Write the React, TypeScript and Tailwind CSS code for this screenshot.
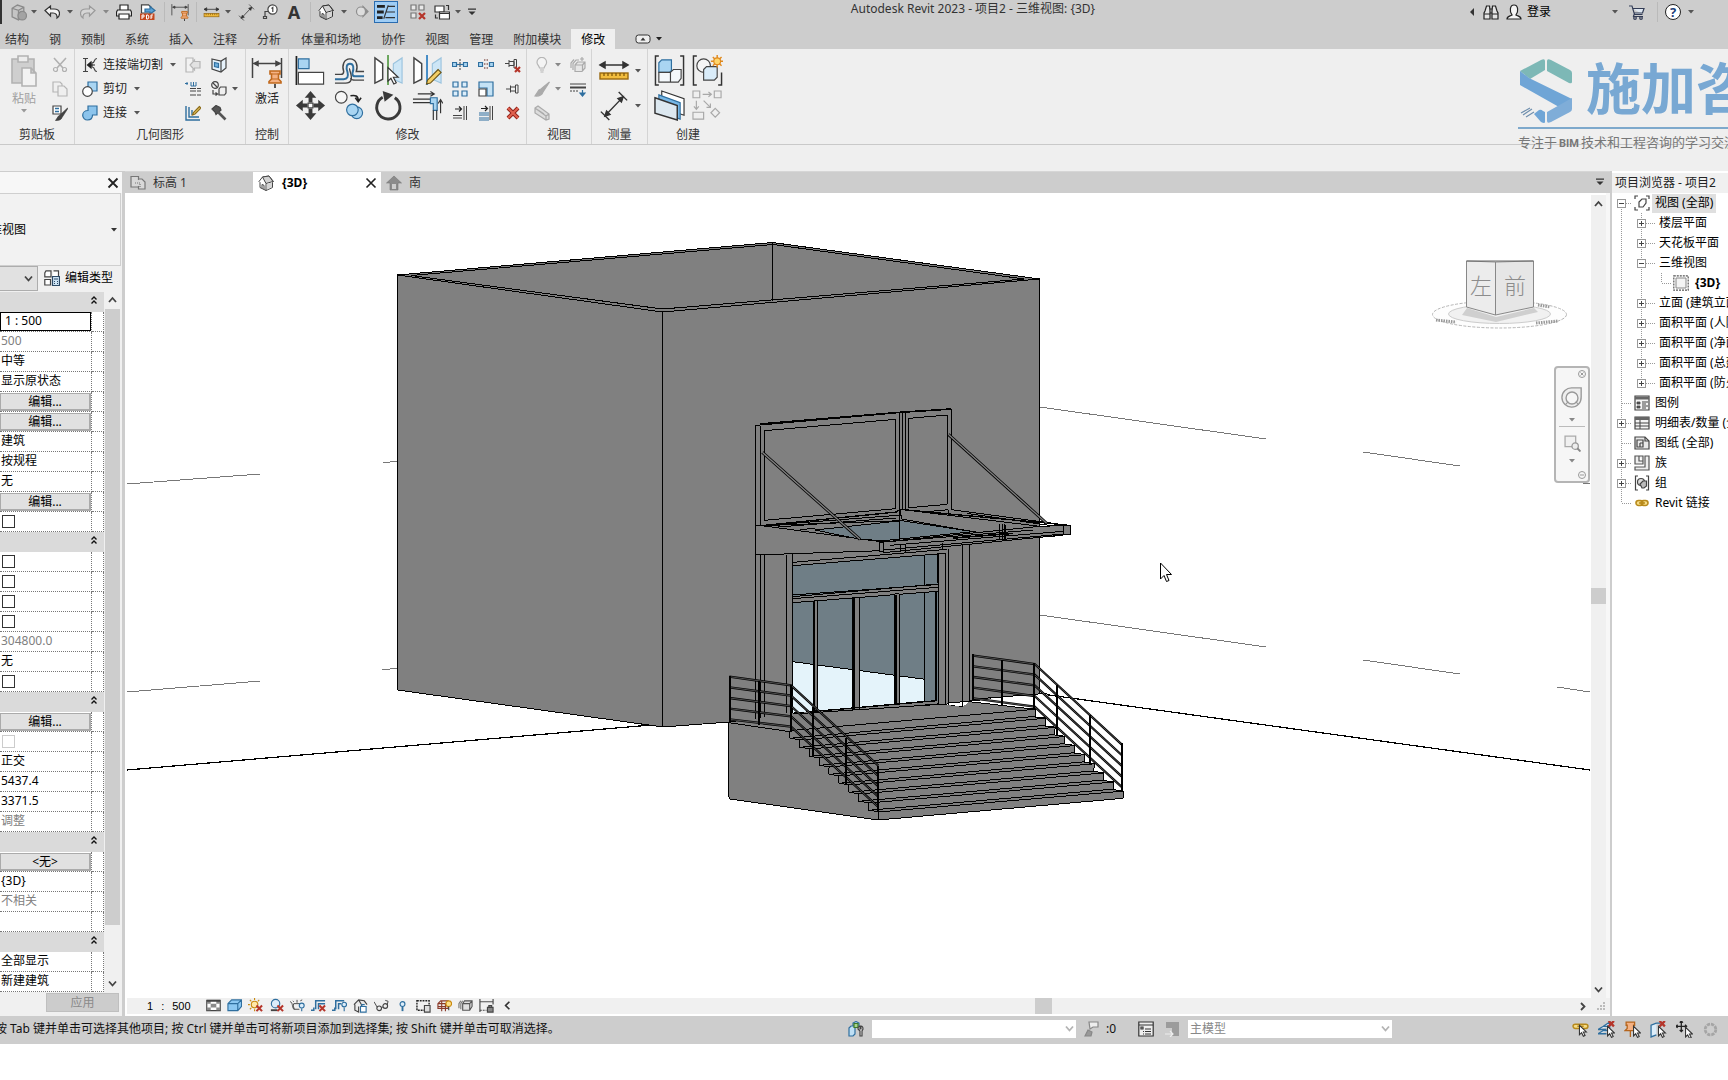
import React from "react";

type Kids = { children?: React.ReactNode };

function Icon({ children, box = 16, className = "size-4" }: Kids & { box?: number; className?: string }) {
  return (
    <svg viewBox={`0 0 ${box} ${box}`} className={`${className} shrink-0`} fill="none" stroke="#444" strokeWidth={1.2} aria-hidden="true">
      {children}
    </svg>
  );
}

function Caret({ className = "w-3", color = "#555" }: { className?: string; color?: string }) {
  return (
    <span className={`${className} flex shrink-0 items-center justify-center`}>
      <svg viewBox="0 0 6 4" className="h-1 w-1.5" aria-hidden="true">
        <path d="M0 0h6L3 3.6z" fill={color} />
      </svg>
    </span>
  );
}

function Tool({ label, children, className = "h-6 w-6" }: Kids & { label: string; className?: string }) {
  return (
    <button type="button" aria-label={label} className={`${className} flex shrink-0 items-center justify-center`}>
      {children}
    </button>
  );
}

const Rule = () => (
  <span className="flex w-2 shrink-0 justify-center">
    <span className="h-5 w-px bg-[#bababa]" />
  </span>
);

const B = "#2f6f9f";
const L = "#a9d5f2";
const RedX = ({ x = 9, y = 9, s = 6 }) => (
  <path d={`M${x} ${y}l${s} ${s}M${x + s} ${y}l${-s} ${s}`} stroke="#b5352a" strokeWidth={2.2} />
);
const Pointer = ({ x = 7, y = 5 }) => (
  <path d={`M${x} ${y}v9l2-2 1.7 3.4 1.6-.8-1.6-3.3h2.8z`} fill="#fff" stroke="#333" strokeWidth={1} />
);

const House = ({ color = "#333" }) => (
  <Icon>
    <path d="M1 6.500L4.500 2 11 1l4.500 5.500-1 1v5L8 15.500 2 12.500V7.500z" fill="#fff" stroke={color} strokeWidth={1} />
    <path d="M4.500 2L8 8.500l7-2L11 1z" fill="#d2d2d2" stroke={color} strokeWidth={1} />
    <path d="M8 8.500v7M4 13.300V9.500l2 .8v4" stroke={color} strokeWidth={1} />
    <path d="M9 9l5-1.400v4.500l-5 2.300z" fill="#d5d5d5" stroke="none" />
  </Icon>
);

const DimPin = ({ size = "size-4" }) => (
  <Icon box={32} className={size}>
    <path d="M1.500 2v20M30.500 2v20M3 7.500h26M3 7.500l4-2v4zM29 7.500l-4-2v4z" strokeWidth={1.500} fill="#444" />
    <path d="M19 15h10v3h-1.500v5l2.500 2.500V27H18v-1.500l2.500-2.500v-5H19z" fill="#f4b183" stroke="#c0681c" strokeWidth={1.6} />
    <path d="M21 18h6M20.500 23h7" stroke="#c0681c" strokeWidth={1.200} />
    <path d="M24 28v4" strokeWidth={1.8} />
  </Icon>
);

const Ruler = ({ size = "size-4" }) => (
  <Icon box={32} className={size}>
    <path d="M2 10h28M2 10l5-3v6zM30 10l-5-3v6z" fill="#333" stroke="#333" strokeWidth={1.500} />
    <rect x="2" y="18" width="28" height="6" fill="#f2bd3e" stroke="#9a6a10" strokeWidth={1.400} />
    <path d="M6 18v3M10 18v3M14 18v3M18 18v3M22 18v3M26 18v3" stroke="#7a5208" />
  </Icon>
);

const DiagonalDim = ({ size = "size-4" }) => (
  <Icon box={32} className={size}>
    <path d="M2 22l9 9M21 1l9 9M6 27L26 6" stroke="#333" strokeWidth={1.500} />
    <path d="M6 27l2-6 4 4zM26 6l-6 2 4 4z" fill="#333" stroke="#333" />
  </Icon>
);

function QuickAccess() {
  return (
    <div className="flex h-6 items-center border-l-2 border-[#333] pl-1.5">
      <Tool label="同步" className="h-6 w-5">
        <Icon className="size-[17px]">
          <path d="M2 4l5-3 6 2v8l-5 4-6-3zM2 4l6 2 5-3M8 6v9" stroke="#8a8a8a" fill="#c4c4c4" />
          <circle cx="11.500" cy="11" r="4" fill="#a3a3a3" stroke="#8a8a8a" />
        </Icon>
      </Tool>
      <Caret />
      <Tool label="放弃">
        <Icon>
          <path d="M1 6.500L6.500 2v3H10c3.500 0 5.500 2 5.500 4.500 0 2-1 3.500-2.500 4.500.3-3-1-5-4-5H6.500v3z" fill="#f4f4f4" stroke="#333" />
        </Icon>
      </Tool>
      <Caret />
      <Tool label="重做">
        <Icon>
          <path d="M15 6.500L9.500 2v3H6C2.500 5 .5 7 .5 9.500c0 2 1 3.500 2.500 4.500-.3-3 1-5 4-5h2.500v3z" fill="#d6d6d6" stroke="#9a9a9a" />
        </Icon>
      </Tool>
      <Caret color="#888" />
      <Tool label="打印">
        <Icon>
          <path d="M4 6V1h8v5" fill="#fff" stroke="#222" />
          <path d="M1.500 6h13L15.500 8v4H.5V8z" fill="#eee" stroke="#222" />
          <path d="M3 10h10v5H3z" fill="#fff" stroke="#222" />
        </Icon>
      </Tool>
      <Tool label="导出 PDF">
        <Icon>
          <path d="M1.500 9V.8h7L11 3v6z" fill="#fff" />
          <path d="M5 5h5V2.500L15 6.500 10 10V8H5z" fill="#5aa2d6" stroke={B} />
          <path d="M0 9.500h14.500V16H0z" fill="#c4481f" stroke="none" />
          <path d="M2 15v-4h2v2H2M6.500 11h1.500l1 2-1 2H6.500zM11 15v-4h2M11 13h1.500" stroke="#fff" strokeWidth={1} />
        </Icon>
      </Tool>
      <Rule />
      <Tool label="激活尺寸标注"><DimPin size="size-[18px]" /></Tool>
      <Rule />
      <Tool label="测量" className="h-6 w-[22px]"><Ruler size="size-[17px]" /></Tool>
      <Caret />
      <Tool label="对齐尺寸标注"><DiagonalDim size="size-[17px]" /></Tool>
      <Tool label="按类别标记">
        <Icon>
          <circle cx="10.500" cy="5.500" r="4.600" fill="#fff" />
          <path d="M9.500 4.500l1.300-1v4.500M6 7.500H3v5.500M1.500 12.500h3v2h-3z" />
        </Icon>
      </Tool>
      <Tool label="文字">
        <span className="text-[18px] font-bold leading-6 text-[#333]">A</span>
      </Tool>
      <Rule />
      <Tool label="默认三维视图"><House /></Tool>
      <Caret />
      <Tool label="剖面">
        <Icon>
          <path d="M9 2.500l5 5-5 5z" fill="#8d8d8d" stroke="#8d8d8d" />
          <circle cx="7" cy="7.500" r="4.500" fill="#ddd" stroke="#8d8d8d" />
        </Icon>
      </Tool>
      <button type="button" aria-label="细线" className="flex h-[22px] w-6 shrink-0 items-center justify-center border border-[#2a6cb0] bg-[#9fcdf5]">
        <Icon className="size-[18px]">
          <path d="M0 3h7M0 8h6M0 13h5" stroke="#222" strokeWidth={2.600} />
          <path d="M9.500 3H16M8.500 8H16M7.500 13H16M10 2L6 14" stroke="#333" strokeWidth={1} />
        </Icon>
      </button>
      <Tool label="关闭非活动视图" className="ml-2 h-6 w-6">
        <Icon>
          <path d="M1 1h5v5H1zM9 1h5v5H9zM1 9h5v5H1z" fill="#e9e9e9" stroke="#777" />
          <RedX x={9} y={9} s={6} />
        </Icon>
      </Tool>
      <Tool label="切换窗口">
        <Icon>
          <path d="M1 2h9v6H1z" fill="#fff" stroke="#333" />
          <path d="M5.500 8h10v7h-10zM5.500 9.500h10" fill="#fff" stroke="#333" />
          <path d="M12 1.500h2.500V6M1.500 10.500V14H4" stroke="#333" />
        </Icon>
      </Tool>
      <Caret className="w-2" />
      <Tool label="自定义快速访问工具栏" className="h-6 w-5">
        <svg viewBox="0 0 8 8" className="size-2" aria-hidden="true">
          <path d="M0 .5h8v1.300H0zM.5 3.500h7L4 7z" fill="#333" />
        </svg>
      </Tool>
    </div>
  );
}

const ribbonTabs = ["结构", "钢", "预制", "系统", "插入", "注释", "分析", "体量和场地", "协作", "视图", "管理", "附加模块"];

function TitleBar() {
  return (
    <header className="bg-[#cdcdcd]">
      <div className="flex h-[29px] items-start">
        <QuickAccess />
        <h1 className="min-w-0 flex-1 truncate text-center text-xs leading-[18px] text-[#333]">
          Autodesk Revit 2023 - 项目2 - 三维视图: {"{3D}"}
        </h1>
        <div className="flex h-6 w-[264px] shrink-0 items-center text-xs">
          <Tool label="收拢搜索" className="h-6 w-4">
            <svg viewBox="0 0 4 8" className="h-2 w-1" aria-hidden="true"><path d="M4 0v8L0 4z" fill="#333" /></svg>
          </Tool>
          <Tool label="搜索" className="h-6 w-[22px]">
            <Icon>
              <path d="M2 7l1.500-5h3L7 7v8H1V9zM14 7l-1.500-5h-3L9 7v8h6V9zM7 5h2M7 9h2M1 10h6M9 10h6" fill="#e4e4e4" stroke="#222" />
            </Icon>
          </Tool>
          <button type="button" className="flex h-6 items-center">
            <span className="flex w-6 justify-center">
              <Icon>
                <path d="M1 15c0-2.500 2-2.500 5-4C3.500 8 3.500 1 8 1s4.500 7 2 10c3 1.500 5 1.500 5 4z" fill="#f4f4f4" stroke="#222" />
              </Icon>
            </span>
            <span className="ml-px">登录</span>
          </button>
          <span className="w-[58px]" />
          <Caret />
          <Tool label="Autodesk App Store" className="h-6 w-8">
            <Icon>
              <path d="M0 2h3l2.500 8.500h8M3.500 4.500H15L13.500 9H5" fill="#dfe8f2" stroke="#333c55" />
              <path d="M5 10.500l-.5 2H14" stroke="#333c55" />
              <circle cx="6" cy="14" r="1.300" stroke="#333c55" /><circle cx="12" cy="14" r="1.300" stroke="#333c55" />
            </Icon>
          </Tool>
          <Rule />
          <Tool label="帮助">
            <span className="flex size-4 items-center justify-center rounded-full border border-[#222] bg-white text-[13px] font-bold leading-none text-[#1d3f7a]">?</span>
          </Tool>
          <Caret />
        </div>
      </div>
      <nav className="-ml-[5px] flex h-5 items-stretch text-xs text-[#333]">
        {ribbonTabs.map((t) => (
          <button key={t} type="button" className="shrink-0 px-[10px] pt-0.5">{t}</button>
        ))}
        <button type="button" aria-current="page" className="shrink-0 bg-[#efefef] px-[10px] pt-0.5 text-black">修改</button>
        <button type="button" aria-label="最小化功能区" className="ml-5 flex items-center gap-1">
          <svg viewBox="0 0 16 10" className="h-2.5 w-4" aria-hidden="true">
            <rect x="1" y="1" width="14" height="8" rx="2.500" fill="#eee" stroke="#333" />
            <path d="M5.500 6.500h5L8 3.500z" fill="#333" />
          </svg>
          <Caret className="w-2" color="#222" />
        </button>
      </nav>
    </header>
  );
}

function Panel({ title, className, children, last }: Kids & { title: string; className: string; last?: boolean }) {
  return (
    <section className={`${className} flex shrink-0 flex-col pt-1 ${last ? "" : "border-r border-[#d4d4d4]"}`}>
      <div className="flex h-[74px]">{children}</div>
      <h2 className="text-center text-xs leading-4 text-[#333]">{title}</h2>
    </section>
  );
}

const Small = ({ label, children }: Kids & { label: string }) => <Tool label={label} className="h-6 w-full">{children}</Tool>;
const Big = ({ label, children }: Kids & { label: string }) => (
  <Tool label={label} className="h-[35px] w-full"><Icon box={32} className="size-[31px]">{children}</Icon></Tool>
);

function TextTool({ text, icon }: { text: string; icon: React.ReactNode }) {
  return (
    <button type="button" className="flex h-6 items-center text-xs">
      <span className="flex w-[21px] items-center"><Icon>{icon}</Icon></span>
      {text}
      <Caret className="ml-1 w-3" />
    </button>
  );
}

function Ribbon() {
  return (
    <div className="flex h-24 overflow-hidden border-b border-[#c9c9c9] bg-[#efefef] text-[#222]">
      <Panel title="剪贴板" className="w-[75px]">
        <button type="button" className="flex w-12 flex-col items-center text-xs leading-4 text-[#a0a0a0]">
          <Icon box={32} className="mt-0.5 size-8">
            <path d="M4 4h22v24H4z" fill="#cfcfcf" stroke="#b2b2b2" strokeWidth={1.600} />
            <path d="M10 1h10v6H10z" fill="#ececec" stroke="#b2b2b2" strokeWidth={1.600} />
            <path d="M14 13h9l5 5v13H14zM23 13v5h5" fill="#f2f2f2" stroke="#b2b2b2" strokeWidth={1.600} />
          </Icon>
          <span className="mt-1">粘贴</span>
          <Caret className="mt-0.5 w-3" color="#999" />
        </button>
        <div className="w-6">
          <Small label="剪切到剪贴板">
            <Icon><path d="M2 1l9 10M14 1L5 11" stroke="#b0b0b0" strokeWidth={1.600} /><circle cx="3.500" cy="12.500" r="2" stroke="#b0b0b0" /><circle cx="12.500" cy="12.500" r="2" stroke="#b0b0b0" /></Icon>
          </Small>
          <Small label="复制到剪贴板">
            <Icon><path d="M1 1h7l2 2v8H1z" stroke="#b5b5b5" /><path d="M6 5h6l3 3v7H6z" fill="#efefef" stroke="#b5b5b5" /></Icon>
          </Small>
          <Small label="匹配类型属性">
            <Icon><path d="M1 1h8v8H1z" fill="#fff" /><path d="M3 3.500h4M3 6.500h4" stroke={B} strokeWidth={1.600} /><path d="M15.500 3L8 10l-1.500 1-3 4.500c3 .3 6-.8 6.500-3L15.500 4z" fill="#444" stroke="#333" strokeWidth={.6} /></Icon>
          </Small>
        </div>
      </Panel>

      <Panel title="几何图形" className="w-[171px]">
        <div className="w-[105px] shrink-0 pl-[7px]">
          <TextTool text="连接端切割" icon={<><path d="M1 1.500h5M1 14.500h5M3.500 1.500v13M15 1.500c-4 0-1 4-5 4.500v4c4 .5 1 4.500 5 4.500" /><path d="M13 8H6M9 5L5.500 8 9 11z" fill="#222" stroke="#222" /></>} />
          <TextTool text="剪切" icon={<><path d="M6 1h9v9H6z" fill={L} stroke={B} /><circle cx="5.500" cy="10.500" r="4.800" fill="#fff" /></>} />
          <TextTool text="连接" icon={<path d="M6 1h9v9h-4.500c0 3-2 5-5 5a4.700 4.700 0 0 1-4.800-4.800C.7 7.500 3 5.500 6 5.500z" fill="#8cc4ec" stroke={B} />} />
        </div>
        <div className="w-[26px] shrink-0">
          <Small label="连接端重合"><Icon><path d="M8 4V1H1v14h7v-3" fill="#f2f2f2" stroke="#b5b5b5" /><path d="M15 4.500H9.500V3L5 8l4.500 5v-2H15z" fill="#e2e2e2" stroke="#b5b5b5" /></Icon></Small>
          <Small label="梁柱连接"><Icon><path d="M0 2.500h3M2 1v3M6 1v4h5V1M8.500 1v4" strokeWidth={1} stroke={B} /><path d="M5 7.500h11M5 10h11M5 14h11" strokeWidth={1} strokeDasharray="6 1" /></Icon></Small>
          <Small label="墙连接"><Icon><path d="M1 1v14h14M4 2v10h10M7 5v5" stroke={B} strokeWidth={1.400} /><path d="M14.500 1.500l-6 6-1 2.500 2.500-1 6-6z" fill="#f1cf6b" stroke="#8c6c1a" /></Icon></Small>
        </div>
        <div className="w-[25px] shrink-0">
          <Small label="拆分面"><Icon><path d="M1 2l9 2 5-3v10l-5 4-9-3z" fill="#e6f2fb" /><path d="M10 4v11" /><path d="M3.500 5.500l4 1v4l-4-1z" fill="#6fb1e0" stroke={B} /></Icon></Small>
          <Small label="填色"><Icon><circle cx="4" cy="4" r="3.300" /><path d="M2 2l4 4M8 8l1.500-2H15v6l-1.500 2H8zM2 9v4h4M4.500 11.500L6.500 13l-2 1.500" /></Icon></Small>
          <Small label="拆除"><Icon><path d="M1 4l4-3.500 4 2L10 5 5 9.500 4 7z" fill="#555" /><path d="M7 7l7.500 7.500" strokeWidth={2.600} stroke="#555" /></Icon></Small>
        </div>
        <div className="mt-6 flex h-6"><Caret className="w-2" /></div>
      </Panel>

      <Panel title="控制" className="w-[43px]">
        <button type="button" className="flex w-full flex-col items-center text-xs leading-4">
          <span className="mt-[3px]"><DimPin size="size-8" /></span>
          <span className="mt-[3px]">激活</span>
        </button>
      </Panel>

      <Panel title="修改" className="w-[238px]">
        <div className="ml-0.5 grid w-[156px] shrink-0 grid-cols-4 content-start">
          <Big label="对齐"><path d="M1.500 1v30" stroke="#222" strokeWidth={1.800} /><path d="M3.500 4h11v10h-11z" fill={L} stroke={B} /><path d="M3.500 18h26v12h-26z" fill="#fff" /></Big>
          <Big label="偏移"><path d="M1 20h6c2 0 3-1 3-3-2-6 0-13 6.500-13S25 11 23 17h8" stroke="#444" strokeWidth={1.500} /><path d="M1 25h9c4 0 5-3 4-7-2-5-1-9 2.500-9s4.500 4 2.500 10c0 2 1 3 3 3h9" fill="none" stroke={B} strokeWidth={2} /><path d="M1 29h11c6 0 7-4 5-11-1-3-1-4-.5-4" stroke="#444" strokeWidth={1.400} /><path d="M17 24c1 2 3 2 5 2h9" stroke="#444" strokeWidth={1.400} /></Big>
          <Big label="镜像 - 拾取轴"><path d="M2 3l8 6v16l-8 4z" fill="#fff" strokeWidth={1.500} /><path d="M21 9l9-6v26l-9-4z" fill="#cde6f6" stroke="#9cc4de" /><path d="M15.500 0v31" stroke="#5a9c4a" strokeWidth={1.800} /><path d="M15.500 13v14l3-3 3 6 2.500-1.300-3-5.700h5z" fill="#fff" stroke="#333" /></Big>
          <Big label="镜像 - 绘制轴"><path d="M2 3l8 6v16l-8 4z" fill="#fff" strokeWidth={1.500} /><path d="M21 9l9-6v26l-9-4z" fill="#cde6f6" stroke="#9cc4de" /><path d="M15.500 0v31" stroke="#2f7fc0" strokeWidth={1.800} /><path d="M27 15L16 26l-1 4 4-1 11-11z" fill="#f3cf66" stroke="#6d5518" /></Big>
          <Big label="移动"><path d="M16 1l6 7h-4v5h-4V8h-4zM16 31l6-7h-4v-5h-4v5h-4zM1 16l7-6v4h5v4H8v4zM31 16l-7-6v4h-5v4h5v4z" fill="#3a3a3a" stroke="none" /><path d="M13.500 13.500h5v5h-5z" fill="#fff" /></Big>
          <Big label="复制"><circle cx="7.500" cy="7.500" r="6" fill="#f6f6f6" /><path d="M17 6c5-1 8 0 8 5M22 8l3 4 3-4" stroke="#222" strokeWidth={1.600} /><circle cx="23.500" cy="23.500" r="6" fill={L} stroke={B} /><circle cx="19" cy="20.500" r="6" fill={L} stroke={B} /></Big>
          <Big label="旋转"><path d="M10 7.500a12 12 0 1 0 12.500.5" strokeWidth={3} stroke="#3a3a3a" /><path d="M10 1l11 4-9 7z" fill="#3a3a3a" stroke="none" /></Big>
          <Big label="修剪/延伸为角"><path d="M1 9.500h18M1 13h18" stroke="#333" /><path d="M19 8h7v13h-4V14h-3z" fill={L} stroke={B} /><path d="M22 21v10M25.500 21v10" stroke="#333" /><path d="M6 4h16M19 1.500L23 4l-4 2.500M29.500 24V11M27 14l2.500-4 2.500 4" stroke="#333" /></Big>
        </div>
        <div className="grid flex-1 grid-cols-3 content-start">
          <Small label="拆分图元"><Icon><path d="M.5 5.500h4v4h-4zM11.500 5.500h4v4h-4z" fill={L} stroke={B} /><path d="M4.500 7.500h7" stroke={B} /><path d="M8 2v11" stroke="#555" strokeDasharray="2 1" /></Icon></Small>
          <Small label="用间隙拆分"><Icon><path d="M.5 5.500h4v4h-4zM11.500 5.500h4v4h-4z" fill={L} stroke={B} /><path d="M6.800 2v11M9.200 2v11" stroke="#8a5a55" strokeWidth={1} strokeDasharray="2 2" /></Icon></Small>
          <Small label="解锁"><Icon><path d="M0 6.500h4M4 3v7M4 4.500h5v4H4M9 2.500h2.500v8.500H9z" strokeWidth={1} /><RedX x={10} y={10} s={5} /></Icon></Small>
          <Small label="阵列"><Icon><path d="M1 1h5v5H1zM10 1h5v5h-5zM1 10h5v5H1zM10 10h5v5h-5z" fill="#dceefb" stroke={B} /></Icon></Small>
          <Small label="缩放"><Icon><path d="M1 1h14v14H9V7H1z" fill="#c4e2f5" stroke={B} /><path d="M1 8h7v7H1z" fill="#fff" /></Icon></Small>
          <Small label="锁定"><Icon><path d="M1 8h4.500M5.500 4.500v7M5.500 6h5v4h-5M10.500 4H13v8h-2.500z" strokeWidth={1} /></Icon></Small>
          <Small label="修剪/延伸单个图元"><Icon><path d="M12 1v14M14.500 1v14M1 10.500h9M1 13h9" strokeWidth={1} /><path d="M3 4h6M7 1.500L9.500 4 7 6.500" stroke="#222" /></Icon></Small>
          <Small label="修剪/延伸多个图元"><Icon><path d="M12 1v14M14.500 1v14" strokeWidth={1} /><path d="M1 8h10M1 10h10M1 13h10M1 15h10" stroke={B} strokeWidth={1} /><path d="M3 3.500h6M7 1l2.500 2.500L7 6" stroke="#222" /></Icon></Small>
          <Small label="删除"><Icon><path d="M3 3l10 10M13 3L3 13" stroke="#8f2018" strokeWidth={4} /><path d="M3 3l10 10M13 3L3 13" stroke="#e0614f" strokeWidth={2.200} /></Icon></Small>
        </div>
      </Panel>

      <Panel title="视图" className="w-[65px]">
        <div className="w-7 pl-0.5">
          <Small label="在视图中隐藏"><Icon><path d="M5.500 11C5 8.500 3 8 3 5.200a4.800 4.800 0 0 1 9.600 0c0 2.800-2 3.300-2.500 5.800zM6 13h4M6.500 15h3" stroke="#b5b5b5" fill="#f4f4f4" /></Icon></Small>
          <Small label="替换视图中的图形"><Icon><path d="M15.500 1L7 8l-2 1-4 6c4 .3 7-1 8-4z" fill="#aaa" stroke="#aaa" /></Icon></Small>
          <Small label="选择框"><Icon><path d="M1 3l3-2 11 8v5l-3 1L1 8zM1 3l11 8v4M12 11l3-2M4 5l6 4" fill="#ddd" stroke="#aaa" /></Icon></Small>
        </div>
        <div className="flex w-2 flex-col"><span className="flex h-6"><Caret className="w-1.5" color="#888" /></span><span className="flex h-6"><Caret className="w-1.5" color="#888" /></span></div>
        <div className="flex-1 pl-0.5">
          <Small label="置换图元"><Icon><path d="M5 8l2.500-3H15v6l-3 3.500H5zM5 8h7.500v6M12.500 8L15 5" fill="#e6e6e6" stroke="#aaa" /><path d="M3 13V6.500L6 3h3M1 11V6l3-3.500M12 0v4M10 2h4" stroke="#aaa" /></Icon></Small>
          <Small label="线处理"><Icon><path d="M0 3h16" strokeWidth={1} /><path d="M0 6.500h16" strokeWidth={2} /><path d="M0 10h9" strokeDasharray="2 1" /><path d="M12.500 9v5M10 12l2.500 3 2.500-3z" fill={B} stroke={B} /></Icon></Small>
        </div>
      </Panel>

      <Panel title="测量" className="w-14">
        <div className="w-[42px] pl-px">
          <Tool label="测量两个参照之间的距离" className="h-[35px] w-full"><Ruler size="size-8" /></Tool>
          <Tool label="对齐" className="h-[35px] w-full"><DiagonalDim size="size-[30px]" /></Tool>
        </div>
        <div className="flex flex-col"><span className="flex h-[35px]"><Caret className="w-2" /></span><span className="flex h-[35px]"><Caret className="w-2" /></span></div>
      </Panel>

      <Panel title="创建" className="w-20" last>
        <div className="ml-0.5 grid w-[76px] shrink-0 grid-cols-2 content-start">
          <Big label="创建组"><path d="M5 1H1.500v30H5M27 1h3.500v30H27" strokeWidth={1.500} stroke="#333" /><path d="M5 8l3-3h10v11l-2 2H5z" fill={L} stroke={B} /><path d="M5 18h12v10H5zM17 18l3-3h8v9l-3 4h-8z" fill="#f4f8fb" /></Big>
          <Big label="创建零件"><path d="M5 1H1.500v30H5M30.500 18v13H27" strokeWidth={1.500} stroke="#333" /><circle cx="12" cy="11" r="7" fill="#f6f6f6" /><path d="M12 15l3-3h11v11l-3 3H12z" fill="#d9ecf9" /><path d="M26 0v13M19.500 6.500h13M21.500 2l9 9M30.500 2l-9 9" stroke="#e08a1e" strokeWidth={1.500} /><circle cx="26" cy="6.500" r="3.500" fill="#ffd66b" stroke="#e08a1e" /></Big>
          <Big label="创建部件"><path d="M8 1l23 8v17l-23-8z" fill="#fff" stroke="#333" /><path d="M5 5l22 8v17l-22-8z" fill="#76b7e6" stroke={B} /><path d="M1 8l23 8v15L1 24z" fill="#dce8f0" stroke="#333" strokeWidth={1.500} /></Big>
          <Big label="创建类似实例"><path d="M1 1h7v7H1zM23 1h7v7h-7zM1 23h11v7H1zM24 19l4.500 4.500L24 28l-4.500-4.500zM11 4.500h9M17 2l3 2.500L17 7M4.500 11v9M2 17l2.500 3L7 17M12 11l7 7M19 14v4h-4" stroke="#a8a8a8" /></Big>
        </div>
      </Panel>
    </div>
  );
}

function Watermark() {
  return (
    <div className="pointer-events-none absolute right-0 top-[56px] w-[210px] overflow-hidden whitespace-nowrap">
      <div className="flex h-[73px] items-center border-b-2 border-[#7ea9cc] pl-0.5">
        <svg viewBox="0 0 54 66" className="h-[66px] w-[54px] shrink-0" aria-hidden="true">
          <path d="M0 12L21 1q4-2 4 1v9L10 20z" fill="#7db8b6" />
          <path d="M27 2q0-3 4-1l19 10q2 1 2 3v9q0 2-3 1L27 12z" fill="#7db8b6" />
          <path d="M0 12l9 7 43 21-13 8L0 26z" fill="#6fa5d6" />
          <path d="M27 53l25-14v11q0 2-2 3L31 63q-4 2-4-1z" fill="#7fadd8" />
          <path d="M14 55l5-4q2-1 4 1l2 1v10q0 2-4 0z" fill="#6fa5d6" />
          <path d="M1 54l9-5M3 56l9-6M6 58l8-5" stroke="#6f8fae" strokeWidth="1.200" />
        </svg>
        <span className="mb-2 ml-3 text-[55px] font-bold leading-none text-[#78a8d3]">施加咨询</span>
      </div>
      <p className="text-[13px] leading-[26px] text-[#777]">专注于<span className="mx-0.5 font-['Roboto'] text-[11px] font-bold">BIM</span>技术和工程咨询的学习交流</p>
    </div>
  );
}

type Row = { kind: "head" | "text" | "dim" | "edit" | "check" | "off" | "scale"; text?: string };
const properties: Row[] = [
  { kind: "head" },
  { kind: "scale", text: "1 : 500" },
  { kind: "dim", text: "500" },
  { kind: "text", text: "中等" },
  { kind: "text", text: "显示原状态" },
  { kind: "edit", text: "编辑..." },
  { kind: "edit", text: "编辑..." },
  { kind: "text", text: "建筑" },
  { kind: "text", text: "按规程" },
  { kind: "text", text: "无" },
  { kind: "edit", text: "编辑..." },
  { kind: "check" },
  { kind: "head" },
  { kind: "check" },
  { kind: "check" },
  { kind: "check" },
  { kind: "check" },
  { kind: "dim", text: "304800.0" },
  { kind: "text", text: "无" },
  { kind: "check" },
  { kind: "head" },
  { kind: "edit", text: "编辑..." },
  { kind: "off" },
  { kind: "text", text: "正交" },
  { kind: "text", text: "5437.4" },
  { kind: "text", text: "3371.5" },
  { kind: "dim", text: "调整" },
  { kind: "head" },
  { kind: "edit", text: "<无>" },
  { kind: "text", text: "{3D}" },
  { kind: "dim", text: "不相关" },
  { kind: "text", text: "" },
  { kind: "head" },
  { kind: "text", text: "全部显示" },
  { kind: "text", text: "新建建筑" },
];

function PropertyValue({ row }: { row: Row }) {
  switch (row.kind) {
    case "scale":
      return <input aria-label="视图比例" defaultValue={row.text} className="block h-[19px] w-full border border-black bg-white pb-0.5 pl-1 text-xs leading-4 outline-none" />;
    case "edit":
      return <button type="button" className="mt-px block h-[18px] w-full border border-b-2 border-r-2 border-[#ababab] bg-[#e1e1e1] text-center text-xs leading-[14px]">{row.text}</button>;
    case "check":
    case "off":
      return (
        <input
          type="checkbox"
          aria-label="属性值"
          disabled={row.kind === "off"}
          className="ml-0.5 block size-[13px] appearance-none border border-[#333] bg-white disabled:border-[#ccc]"
        />
      );
    default:
      return <span className={`block truncate pb-px pl-px leading-[18px] ${row.kind === "dim" ? "text-[#808080]" : ""}`}>{row.text}</span>;
  }
}

const Chevron = ({ dir }: { dir: "up" | "down" | "left" | "right" }) => {
  const d = { up: "M1 6l3.500-4L8 6", down: "M1 2.500l3.500 4L8 2.500", left: "M6 1L2.500 4.500 6 8", right: "M3 1l3.500 3.500L3 8" }[dir];
  return <svg viewBox="0 0 9 9" className="size-[9px]" aria-hidden="true"><path d={d} fill="none" stroke="#444" strokeWidth="1.800" /></svg>;
};

function PropertiesPalette() {
  return (
    <aside className="flex w-[125px] shrink-0 flex-col border-r-[3px] border-[#cdcdcd] bg-[#f0f0f0] text-xs">
      <div className="flex h-[22px] items-center justify-end border-t border-[#cdcdcd] bg-[#f7f7f7] pr-px">
        <Tool label="关闭属性" className="size-4"><Icon className="size-3"><path d="M2 2l12 12M14 2L2 14" stroke="#222" strokeWidth={2.400} /></Icon></Tool>
      </div>
      <button type="button" className="mr-px flex h-[73px] items-center justify-between overflow-hidden border border-l-0 border-[#cfcfcf] bg-[#f2f2f2]">
        <span className="-ml-[10px]">维视图</span>
        <Caret color="#333" />
      </button>
      <div className="flex h-[26px] items-start">
        <button type="button" aria-label="类型选择" className="flex h-[25px] w-[38px] items-center justify-end border border-l-0 border-[#adadad] bg-[#e1e1e1] pr-1"><Chevron dir="down" /></button>
        <button type="button" className="ml-1.5 flex h-[23px] items-center gap-[5px]">
          <Icon><path d="M2 .8h5v6H.8V3zM9.500.8h5v6H9M.8 9.500H6.500V15H.8z" fill="#fff" /><path d="M8.500 6.500h7v9h-7z" fill="#cfe5f6" stroke="#2d4a66" /><path d="M10 9h4M10 11.500h1M13 11.500h1M10 13.500h1M13 13.500h1" stroke="#2d4a66" /></Icon>
          编辑类型
        </button>
      </div>
      <div className="flex">
        <table className="w-[104px] table-fixed border-separate border-spacing-0 bg-white">
          <colgroup><col className="w-[92px]" /><col className="w-3" /></colgroup>
          <tbody>
            {properties.map((row, i) =>
              row.kind === "head" ? (
                <tr key={i} className="h-5">
                  <td colSpan={2} className="bg-[#dadada] p-0">
                    <button type="button" aria-label="折叠" className="mb-1 ml-[90px] flex w-2 justify-center">
                      <svg viewBox="0 0 8 10" className="h-2.5 w-2" fill="none" stroke="#111" strokeWidth="1.400" aria-hidden="true"><path d="M1.500 4.500L4 2l2.500 2.500M1.500 8.500L4 6l2.500 2.500" /></svg>
                    </button>
                  </td>
                </tr>
              ) : (
                <tr key={i} className="h-5">
                  <td className="border-b border-r border-dotted border-[#777] p-0"><PropertyValue row={row} /></td>
                  <td className="border-b border-r border-dotted border-[#777] p-0" />
                </tr>
              ),
            )}
          </tbody>
        </table>
        <div className="ml-px flex w-[15px] flex-col items-center">
          <Tool label="向上滚动" className="h-[17px] w-full"><Chevron dir="up" /></Tool>
          <div className="w-full flex-[616] bg-[#cdcdcd]" />
          <div className="flex-[50]" />
          <Tool label="向下滚动" className="h-[17px] w-full"><Chevron dir="down" /></Tool>
        </div>
      </div>
      <div className="flex justify-end pr-[3px] pt-px">
        <button type="button" disabled className="h-[19px] w-[73px] border border-[#bfbfbf] bg-[#cccccc] leading-4 text-[#8a8a8a]">应用</button>
      </div>
    </aside>
  );
}

const rail = (points: number[][], key: string) => {
  const pts = points.map((p) => p.join(",")).join(" ");
  return (
    <g key={key} fill="none" shapeRendering="auto">
      <polyline points={pts} stroke="#000" strokeWidth="7" />
      <polyline points={pts} stroke="#777" strokeWidth="2" />
    </g>
  );
};

const stepIndex = [0, 1, 2, 3, 4, 5, 6, 7, 8];
const stepsRight = stepIndex.map((i) => `L${1006 + 29.300 * i} ${411 + 27.300 * i}L${1036 + 29.300 * i} ${414 + 27.300 * i}`).join("");
const stepsLeft = [...stepIndex].reverse().map((i) => `L${299 + 29.500 * i} ${479 + 27 * i}L${269 + 29.500 * i} ${475 + 27 * i}L${269 + 29.500 * i} ${455 + 27 * i}`).join("");

/* Doorway, canopy, stairs and railings, drawn on a grid three times finer than the building. */
function Entrance() {
  return (
    <g transform="translate(700 579) scale(.3333)" stroke="#000" strokeWidth="3" fill="none">
      <path d="M278-43L715-78V362L278 400z" fill="#6f7e86" stroke="none" />
      <path d="M278 245L675 298V364L278 400z" fill="#e4f3fa" />
      <path d="M675-74V362" />
      <path d="M278 50L737 10V32L278 68z" fill="#808080" />
      <path d="M278 45L735 12M278 56L737 20" />
      <path d="M341 62h12v330h-12zM459 52h19v340h-19zM584 42h14v330h-14z" fill="#808080" />
      <path d="M343 62v332M461 54v330M587 44v328M709 32v330M714-78v88" strokeWidth="6" />
      <path d="M718-77V372H742V-90z" fill="#808080" stroke="none" />
      <path d="M278 400L710 362" strokeWidth="4" />
      <path d="M278-53L742-92M278-43L737-80M745-92V375M737-80V372M715-78V372M788-114V382M808-116V365M715 372L788 381" />
      <path d="M166-75V420M181-75V425M193-75V418M259-75V400M277-77V400M166-163V-75L545-88" />
      <path d="M345-150L605-178L820-145L550-118L480-122z" fill="#6f7e86" />
      <path d="M185-163L605-195M185-163L605-178M185-163L550-114M220-158L587-186M300-150L345-156" />
      <path d="M185-163L590-204L600-212L1100-165" strokeWidth="4" />
      <path d="M600-212L1110-150L1060-130L920-134L820-145L605-183z" fill="#808080" />
      <path d="M754-211L1060-170M690-206L745-211V-195M800-200L1090-158M600-212V-116" />
      <path d="M1010-160L1110-165V-137L550-82V-114z" fill="#808080" />
      <path d="M550-114L1000-150M570-104L1090-146M550-90L1090-138" />
      <path d="M760-126L940-140" strokeWidth="5" />
      <path d="M900-168v48M907-168v48M913-168v48M918-166v44" />
      <path d="M1090-164h22v27h-22zM538-114h12v28h-12zM603-104v20M618-106v22M727-112v20" fill="#808080" />
      <path d="M166-163V-463H181V-163zM166-163H185" />
      <path d="M181-465L600-502L754-513V-210M193-448L587-482V-214L193-179zM627-485L742-495V-227L627-217z" />
      <path d="M181-468L600-503L754-513" strokeWidth="5" />
      <path d="M600-502V-212M607-502V-212M616-502V-212" />
      {["M187-383L480-122", "M745-437L1040-170"].map((d) => (
        <g key={d} shapeRendering="auto"><path d={d} strokeWidth="9" /><path d={d} stroke="#808080" strokeWidth="4" /></g>
      ))}
      <path d="M830 360L1040 338L1040 400L1006 388z" fill="#fff" stroke="none" />
      <path d="M815 358L1040 340" />
      <path d={`M86 428L269 400L735 374L788 381L808 365L1006 388${stepsRight}L1270 633V655L535 720L90 657L86 650z`} fill="#808080" stroke="none" />
      <path d={`M808 365L1006 388${stepsRight}L1270 633V655L535 720L90 657L86 650V428L269 455M535 720V697${stepsLeft}`} />
      <path d="M278 402L735 372" />
      <path d="M269 452L1006 388" />
      {stepIndex.map((i) => (
        <path key={i} d={`M${269 + 29.500 * i} ${475 + 27 * i}L${1006 + 29.300 * i} ${409 + 27.300 * i}M${299 + 29.500 * i} ${480 + 27 * i}L${1036 + 29.300 * i} ${415 + 27.300 * i}`} />
      ))}
      {[0, 1, 2, 3, 4].map((i) => rail([[88, 290 + 32 * i], [273, 316 + 31 * i], [535, 557 + 31 * i]], `l${i}`))}
      {[0, 1, 2, 3, 4].map((i) => rail([[820, 227 + 32 * i], [1004, 252 + 32 * i], [1265, 493 + 32 * i]], `r${i}`))}
      <path d="M90 288V428M178 302V436M273 315V456M340 380V530M438 475V612M535 557V697M820 223V362M906 240V375M1003 250V387M1070 315V466M1170 406V552M1265 490V633" strokeWidth="6" />
    </g>
  );
}

function Model() {
  return (
    <svg viewBox="125 192 1466 805" preserveAspectRatio="xMinYMin slice" className="absolute inset-0 size-full" shapeRendering="crispEdges" role="img" aria-label="三维模型">
      <g stroke="#777" strokeWidth="1">
        <path d="M127 483L260 473M383 462L398 460M127 691L260 680M382 669L398 667M1040 406L1266 438M1363 451L1460 465M1560 479L1590 483M1040 614L1266 646M1363 659L1460 673M1557 686L1590 691" />
      </g>
      <path d="M127 769L663 723L729 721M1020 690L1590 769" stroke="#000" strokeWidth="1.200" fill="none" />
      <path d="M397.500 274L772.500 241.500L1039.500 278V693L960 701L729 721L663 726L397.500 689z" fill="#808080" stroke="#000" />
      <g fill="none" stroke="#000">
        <path d="M397.500 274L662.500 311L1039.500 278M662.500 311V726M772.500 242V300" />
        <path d="M411 274.500L773 243.500L1024 278L662.500 308z" />
      </g>
      <Entrance />
      <path d="M1160.500 562v16l3.500-3.500 2.500 6 2.500-1-2.500-6h5z" fill="#fff" stroke="#000" shapeRendering="auto" />
      <g shapeRendering="auto" stroke="#b5b5b5">
        <ellipse cx="1499.500" cy="313.500" rx="67" ry="13.500" fill="#fdfdfd" strokeDasharray="3 1.500" />
        <ellipse cx="1499.500" cy="313" rx="51" ry="9.500" fill="#f1f1f1" stroke="#ccc" />
        <path d="M1467 307l29 9 38-9 4 4-42 10-34-7z" fill="#cfcfcf" stroke="none" />
        <path d="M1436 319l20 2M1536 322l22-2M1538 304l12 2" stroke="#999" strokeWidth="3" strokeDasharray="1.500 1" />
        <path d="M1466.500 260l29 1v53l-29-8z" fill="#ececec" stroke="#888" />
        <path d="M1495.500 261l38-1v46l-38 8z" fill="#e6e6e6" stroke="#888" />
        <path d="M1466.500 260h67" stroke="#666" />
      </g>
      <g fill="#8c8c8c" fontSize="22" fontFamily="'Noto Sans CJK SC', sans-serif" fontWeight="300">
        <text x="1470" y="293">左</text>
        <text x="1504" y="293">前</text>
      </g>
    </svg>
  );
}

function NavigationBar() {
  return (
    <div className="absolute right-px top-[173px] flex h-[117px] w-9 flex-col items-center rounded border-2 border-[#b5b5b5] bg-[#f6f6f6]">
      <Tool label="关闭导航栏" className="h-3 w-full justify-end pr-0.5"><Icon className="size-2"><circle cx="8" cy="8" r="7" stroke="#999" strokeWidth={2} /><path d="M5 5l6 6M11 5l-6 6" stroke="#999" strokeWidth={2} /></Icon></Tool>
      <Tool label="控制盘" className="mt-1.5 size-6">
        <Icon box={24} className="size-[22px]"><path d="M12 1h10v10A10.500 10.500 0 1 1 12 1z" fill="#eee" stroke="#999" strokeWidth={1.500} /><circle cx="12" cy="12" r="6.500" fill="#f6f6f6" stroke="#999" strokeWidth={1.500} /><path d="M5 19l3-3M19 19l-3-3" stroke="#999" /></Icon>
      </Tool>
      <span className="mt-2"><Caret color="#888" /></span>
      <span className="mt-1 h-px w-[26px] bg-[#bbb]" />
      <Tool label="缩放" className="mt-1.5 size-5">
        <Icon className="size-[17px]"><path d="M1 1h10v10H1z" fill="#f0f0f0" stroke="#aaa" /><circle cx="10.500" cy="10.500" r="3" fill="#eee" stroke="#999" /><path d="M12.500 12.500l3 3" stroke="#888" strokeWidth={1.800} /></Icon>
      </Tool>
      <span className="mt-1.5"><Caret color="#888" /></span>
      <Tool label="自定义导航栏" className="mt-auto h-3 w-full justify-end pr-0.5"><Icon className="size-2"><circle cx="8" cy="8" r="7" stroke="#999" strokeWidth={2} /><path d="M4 8h8" stroke="#999" strokeWidth={2} /></Icon></Tool>
    </div>
  );
}

const viewControls: [string, React.ReactNode][] = [
  ["详细程度", <><path d="M.8 2.500h14.400v11H.8z" fill="#fff" /><path d="M1 3h4v3H1zM11 3h4v3h-4zM5 6h6v4H5zM1 10h4v3H1zM11 10h4v3h-4z" fill="#8a8a8a" stroke="none" /><path d="M1 3h14" strokeWidth={2} /></>],
  ["视觉样式", <path d="M1 6l4-4h10.500v7l-4 4.500H1zM1 6h10.500v7.500M11.500 6l4-4" fill="#8cc8f2" stroke={B} />],
  ["关闭日光路径", <><circle cx="7" cy="7" r="3.500" fill="#ffe9a8" stroke="#c98a10" /><path d="M7 0v2M7 12v2M0 7h2M2 2l1.500 1.500M12 2l-1.500 1.500M2 12l1.500-1.500" stroke="#c98a10" /><RedX x={9} y={8} s={6} /></>],
  ["关闭阴影", <><circle cx="7" cy="6" r="4.500" fill="#dcedfa" stroke={B} /><path d="M2 13h7" strokeWidth={2} /><RedX x={9} y={8} s={6} /></>],
  ["渲染", <><path d="M0 4c3 0 2 5 4 8h6M4 6h7M7.500 2v3M3 3l1 1M11 3l2-1M4 6c-1 2 0 5 1 6" strokeWidth={1} /><circle cx="12.500" cy="8" r="2.600" fill="#dcedfa" stroke={B} /><path d="M12.500 11v3" stroke={B} /></>],
  ["裁剪视图", <><path d="M0 13h3v-3M5 12V3h10M8 12V6h7" stroke={B} strokeWidth={1.600} /><RedX x={9} y={8} s={6} /></>],
  ["显示裁剪区域", <><path d="M0 13h3v-3M4 12V3h9M7 12V6h3" stroke={B} strokeWidth={1.600} /><circle cx="13" cy="7" r="2.500" fill="#dcedfa" stroke={B} /><path d="M13 10v4" stroke={B} /></>],
  ["解锁的三维视图", <><path d="M1 7l5-5 6 1 3 4M2 7v6l4 2V9M6 2l3 5v3" fill="#e8e8e8" /><path d="M8 9h6v6H8zM9.500 9V7h3" fill="#fff" stroke={B} /></>],
  ["临时隐藏/隔离", <><circle cx="5.500" cy="11" r="2.500" /><circle cx="12" cy="8.500" r="2.500" /><path d="M0 4l3.500 6M14 7.500l1-4-3-1M8 10.500l1.500-1" strokeWidth={1} /></>],
  ["显示隐藏的图元", <><circle cx="8" cy="6.500" r="2.600" fill="#dcedfa" stroke={B} /><path d="M8 9v5" stroke={B} strokeWidth={2} /></>],
  ["临时视图属性", <><path d="M1 3h13v10H1z" strokeDasharray="2 1" stroke="#222" strokeWidth={1.500} /><path d="M9 8h6v7H9z" fill="#ddd" /></>],
  ["显示分析模型", <><path d="M1 6l3-3h8v8H1zM1 6h8v8M5 3v11M1 9h9" stroke="#8a3b2a" /><circle cx="12.500" cy="6" r="3" fill="#ffe08a" stroke="#c98a10" /><path d="M12.500 9v4" /></>],
  ["高亮显示位移集", <><path d="M5 6l2-3h8v6l-2.500 4H5zM5 6h7.500v7M12.500 6L15 3" fill="#e0e0e0" stroke="#555" /><path d="M3 12V6l2-3M1 11V6l2-3" stroke="#777" /></>],
  ["显示约束", <><path d="M1 1v14M15 1v6" /><path d="M1 4h14" strokeWidth={1} /><path d="M1 13h7" strokeDasharray="2 1" /><path d="M9 10h6v5H9zM10.500 10V8h3v2" fill="#888" /></>],
  ["收拢", <path d="M10 4L6 8l4 4" stroke="#333" strokeWidth={1.800} />],
];

function ViewArea() {
  return (
    <main className="flex min-w-0 flex-1 flex-col">
      <div className="flex h-[22px] items-stretch border-t border-[#d6d6d6] bg-[#cdcdcd] text-xs">
        <button type="button" className="flex w-32 items-center gap-[7px] pl-[5px] text-[#333]">
          <Icon><path d="M8 12H1V1.500h7.500V5" stroke="#777" fill="#d8d8d8" /><path d="M9 4h3l3 3v7H8.500V11" stroke="#777" fill="#d8d8d8" /><path d="M5 8h5v4" stroke="#777" strokeDasharray="1 1" /></Icon>
          标高 1
        </button>
        <div className="flex w-32 items-center bg-white pl-[5px] pr-0.5">
          <button type="button" className="flex flex-1 items-center gap-2 font-bold"><House color="#444" />{"{3D}"}</button>
          <Tool label="关闭视图" className="size-4"><Icon className="size-3"><path d="M2 2l12 12M14 2L2 14" stroke="#222" strokeWidth={2.200} /></Icon></Tool>
        </div>
        <button type="button" className="flex items-center gap-[7px] pl-[5px] text-[#333]">
          <Icon><path d="M8 1l7.500 7H12v7H4V8H.5z" fill="#8b8b8b" stroke="#777" strokeWidth={.6} /><path d="M6 9h4v5H6z" fill="#cdcdcd" stroke="none" /></Icon>
          南
        </button>
        <Tool label="视图列表" className="ml-auto size-5">
          <svg viewBox="0 0 8 8" className="size-2" aria-hidden="true"><path d="M0 .5h8v1.300H0zM.5 3.500h7L4 7z" fill="#333" /></svg>
        </Tool>
      </div>
      <div className="flex min-h-0 flex-1 bg-white">
        <div className="relative min-w-0 flex-1 overflow-hidden">
          <Model />
          <NavigationBar />
        </div>
        <div className="mt-0.5 flex w-[15px] shrink-0 flex-col items-center bg-[#f0f0f0]">
          <Tool label="向上滚动" className="h-[18px] w-full"><Chevron dir="up" /></Tool>
          <div className="flex-[375]" />
          <div className="h-4 w-full bg-[#cdcdcd]" />
          <div className="flex-[376]" />
          <Tool label="向下滚动" className="h-[18px] w-full"><Chevron dir="down" /></Tool>
        </div>
        <div className="w-1 shrink-0 bg-[#f7f7f7]" />
      </div>
      <div className="mb-0.5 ml-0.5 flex h-4 items-center bg-[#f0f0f0]">
        <button type="button" className="flex w-[76px] gap-2 pb-px pl-5 font-['Liberation_Sans'] text-[11px] leading-4">
          <span>1</span><span>:</span><span>500</span>
        </button>
        {viewControls.map(([label, art]) => (
          <Tool key={label} label={label} className="h-4 w-[21px] pb-px"><Icon className="size-[15px]">{art}</Icon></Tool>
        ))}
        <div className="flex-[518]" />
        <div className="h-4 w-[17px] bg-[#cdcdcd]" />
        <div className="flex-[521]" />
        <Tool label="向右滚动" className="h-4 w-5"><Chevron dir="right" /></Tool>
        <span className="flex w-[18px] items-end justify-center">
          <svg viewBox="0 0 9 9" className="size-[9px]" fill="#bbb" aria-hidden="true"><path d="M6 0h2v2H6zM6 3h2v2H6zM6 6h2v2H6zM3 3h2v2H3zM3 6h2v2H3zM0 6h2v2H0z" /></svg>
        </span>
      </div>
    </main>
  );
}

function Guide({ up = true, down = true, box, wide, line = true }: { up?: boolean; down?: boolean; box?: "+" | "-"; wide?: boolean; line?: boolean }) {
  const w = wide ? 27 : 20;
  return (
    <svg viewBox={`0 0 ${w} 20`} className={`${wide ? "w-[27px]" : "w-5"} h-5 shrink-0`} shapeRendering="crispEdges" fill="none" stroke="#999" aria-hidden="true">
      {up && <path d="M9.500 0v10" strokeDasharray="1 1" />}
      {down && <path d="M9.500 10v10" strokeDasharray="1 1" />}
      {line && <path d={`M10 10.500h${wide ? 14 : 10}`} strokeDasharray="1 1" />}
      {box && <path d="M5.500 6.500h8v8h-8z" fill="#fff" stroke="#999" />}
      {box && <path d={box === "+" ? "M7 10.500h5M9.500 8v5" : "M7 10.500h5"} stroke="#444" />}
    </svg>
  );
}

const views: [string, "+" | "-"][] = [
  ["楼层平面", "+"], ["天花板平面", "+"], ["三维视图", "-"], ["{3D}", "-"], ["立面 (建筑立面)", "+"],
  ["面积平面 (人防分区面积)", "+"], ["面积平面 (净面积)", "+"], ["面积平面 (总建筑面积)", "+"], ["面积平面 (防火分区面积)", "+"],
];
const categories: [string, boolean, React.ReactNode][] = [
  ["图例", false, <><path d="M1 1h14v14H1z" fill="#f4f4f4" /><path d="M1 3h14" strokeWidth={3} stroke="#666" /><path d="M3 7h3v2H3zM3 11h3v2H3z" fill="#555" strokeWidth={.8} /><path d="M8 7h6M8 9h4M8 11h6M8 13h4" strokeWidth={1} /></>],
  ["明细表/数量 (全部)", true, <><path d="M1 2h14v12H1z" fill="#f4f4f4" /><path d="M1 3.500h14" strokeWidth={3} stroke="#666" /><path d="M1 8h14M1 11h14M6 5v9" strokeWidth={1} /></>],
  ["图纸 (全部)", false, <><path d="M1 2h10l4 4v8H1z" fill="#e8e8e8" /><path d="M3 5h6v7H3zM6 8v4M6 8h3M11 2v4h4" /></>],
  ["族", true, <path d="M1 1h8v8H1zM5 1v5h4M11 1h4v14H1v-3h10z" fill="#eee" stroke="#555" />],
  ["组", true, <><path d="M4 1H1.500v14H4M12 1h2.500v14H12" /><circle cx="7" cy="7" r="3.500" fill="#ddd" /><path d="M6 9l3-3h3.500v5L10 13H8z" fill="#bbb" /></>],
  ["Revit 链接", false, <path d="M4.500 5.500h2a2.500 2.500 0 0 1 0 5h-2a2.500 2.500 0 0 1 0-5zM9.500 5.500h2a2.500 2.500 0 0 1 0 5h-2a2.500 2.500 0 0 1 0-5zM5 8h6" stroke="#b88a1c" fill="#f6dc85" strokeWidth={1.600} />],
];

function ProjectBrowser() {
  return (
    <aside className="flex w-[118px] shrink-0 flex-col overflow-hidden whitespace-nowrap border-l-2 border-[#cdcdcd] bg-white text-xs">
      <h2 className="mt-0.5 h-5 bg-[#f0f0f0] pl-[3px] leading-5 text-[#222]">项目浏览器 - 项目2</h2>
      <ul>
        <li className="flex h-5 items-center">
          <Guide up={false} box="-" />
          <span className="flex w-5 shrink-0 justify-center"><Icon><path d="M4 1H1v3M12 1h3v3M1 12v3h3M15 12v3h-3M5 7l3-3h4v4l-3 4H5z" stroke="#444" /></Icon></span>
          <button type="button" className="h-[19px] bg-[#dfdfdf] px-[3px]">视图 (全部)</button>
        </li>
        {views.map(([name, box], i) => (
          <li key={name} className="flex h-5 items-center">
            <Guide line={false} />
            {name === "{3D}" ? (
              <>
                <Guide line={false} />
                <Guide down={false} />
                <span className="flex w-[18px] shrink-0 justify-center"><Icon><path d="M.8.8h14.400v14.400H.8z" strokeDasharray="2 1" stroke="#555" /><path d="M3 3h10v10H3z" fill="#f4f4f4" stroke="#888" strokeWidth={1} /></Icon></span>
                <button type="button" className="ml-[5px] font-bold">{name}</button>
              </>
            ) : (
              <>
                <Guide wide box={box} down={i < views.length - 1} />
                <button type="button">{name}</button>
              </>
            )}
          </li>
        ))}
        {categories.map(([name, open, art], i) => (
          <li key={name} className="flex h-5 items-center">
            <Guide box={open ? "+" : undefined} down={i < categories.length - 1} />
            <span className="flex w-5 shrink-0 justify-center"><Icon>{art}</Icon></span>
            <button type="button" className="ml-[3px]">{name}</button>
          </li>
        ))}
      </ul>
    </aside>
  );
}

const selectionTools: [string, React.ReactNode][] = [
  ["选择链接", <><path d="M3 3h10a2 2 0 0 1 0 4H3a2 2 0 0 1 0-4zM5 5h6" stroke="#b88a1c" fill="#f6dc85" strokeWidth={1.400} /><Pointer x={7} y={4} /></>],
  ["选择基线图元", <><path d="M0 8l5-3h6M5 5l6-4v6M0 12l5-3h6M0 8h8M0 12h8" stroke={B} fill="#dcedfa" /><RedX x={10} y={0} s={5} /><Pointer x={9} y={5} /></>],
  ["选择锁定图元", <><path d="M2 1h8v3H9v3l2 2H1l2-2V4H2zM6 9v6" fill="#f4b183" stroke="#b5651d" /><Pointer x={9} y={5} /></>],
  ["按面选择图元", <><path d="M6 2L1 4v11l5-2M6 2h4" stroke={B} fill="#dcedfa" /><RedX x={9} y={0} s={5} /><Pointer x={8} y={5} /></>],
  ["选择时拖曳图元", <><path d="M5 0v10M0 5h10M3.500 1.500L5 0l1.500 1.500M3.500 8.500L5 10l1.500-1.500M1.500 3.500L0 5l1.500 1.500M8.500 3.500L10 5 8.500 6.500" stroke="#222" /><Pointer x={9} y={6} /></>],
  ["后台进程", <circle cx="8" cy="8" r="5" stroke="#a5a5a5" strokeWidth={2.600} strokeDasharray="3 .9" />],
  ["过滤器", <path d="M1 1h14l-5 6v8l-4-3V7z" fill="#fff" stroke="#444" />],
];

function StatusBar() {
  const field = "h-[18px] appearance-none bg-white pl-0.5 text-xs text-[#888] outline-none";
  return (
    <footer className="flex h-7 shrink-0 items-center overflow-hidden bg-[#cdcdcd] pb-0.5 text-xs text-[#111]">
      <p className="-ml-[5px] min-w-0 flex-1 truncate">按 Tab 键并单击可选择其他项目; 按 Ctrl 键并单击可将新项目添加到选择集; 按 Shift 键并单击可取消选择。</p>
      <div className="flex w-[884px] shrink-0 items-center">
        <Tool label="工作集">
          <Icon><path d="M1 7l2-2h4v8l-2 2H1zM5 5V2l3-1.500 3 1.500v3" fill="#bfe0f5" stroke={B} /><path d="M6 2.500h4v4H6z" fill="#a9d48a" stroke="#3d7a2a" /><path d="M10 8c0-2 1-3 2-3v3h1V5c1 0 2 1 2 3l-1 2v5h-2v-5z" fill="#eee" /></Icon>
        </Tool>
        <div className="relative ml-1 flex w-[204px]">
          <select aria-label="活动工作集" className={`${field} w-full`}><option></option></select>
          <span className="pointer-events-none absolute right-0.5 top-1 opacity-40"><Chevron dir="down" /></span>
        </div>
        <button type="button" aria-label="可编辑项" className="ml-2 flex items-center gap-1.5">
          <Icon><path d="M5 1h9v5H9L6 8z" fill="#eee" stroke="#888" /><path d="M1 15l3-6 4 2-1 4z" fill="#999" stroke="#888" /></Icon>
          <span>:0</span>
        </button>
        <Tool label="设计选项" className="ml-[18px] h-6 w-6"><Icon><path d="M.8 1h14.400v14H.8zM1 4h14" fill="#eee" stroke="#333" /><path d="M3 6h2v2H3zM7 8h6M5 10.500h1M7 10.500h6M5 13h1M7 13h6" stroke="#333" /></Icon></Tool>
        <Tool label="添加到选项集" className="ml-0.5 h-6 w-6"><Icon><path d="M2 1h13v14H8V7H2z" fill="#9c9c9c" stroke="none" /><path d="M1 13h8M6 10l3 3-3 3" stroke="#eee" /></Icon></Tool>
        <div className="relative ml-1 flex w-[204px]">
          <select aria-label="活动设计选项" className={`${field} w-full`}><option>主模型</option></select>
          <span className="pointer-events-none absolute right-0.5 top-1 opacity-40"><Chevron dir="down" /></span>
        </div>
        <div className="ml-auto flex w-[161px] shrink-0 overflow-hidden">
          {selectionTools.map(([label, art]) => (
            <Tool key={label} label={label} className="h-6 w-[26px]"><Icon className="size-[17px]">{art}</Icon></Tool>
          ))}
        </div>
      </div>
    </footer>
  );
}

export default function App() {
  return (
    <div className="relative flex min-h-screen flex-col overflow-hidden bg-white font-['Noto_Sans','Noto_Sans_CJK_SC',sans-serif] text-black">
      <TitleBar />
      <Ribbon />
      <div className="h-[26px] shrink-0 bg-[#efefef]" />
      <Watermark />
      <div className="flex flex-1">
        <PropertiesPalette />
        <ViewArea />
        <ProjectBrowser />
      </div>
      <StatusBar />
      <div className="h-9 shrink-0" />
    </div>
  );
}
